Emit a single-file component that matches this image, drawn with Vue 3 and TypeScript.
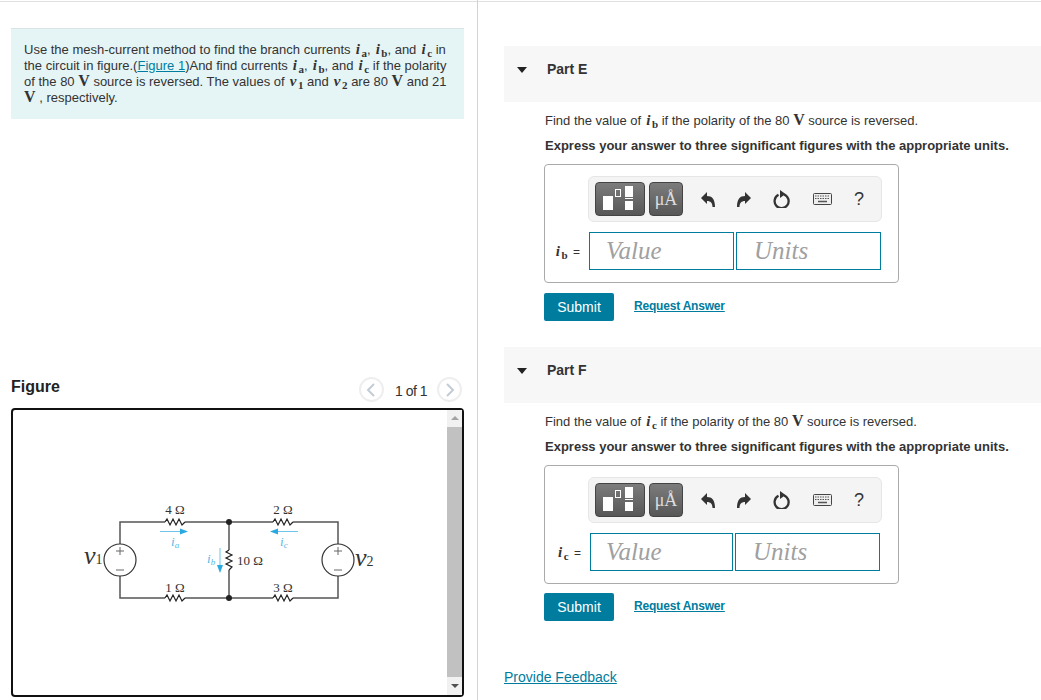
<script setup lang="ts">
interface Part {
  title: string
  sym: string
  sub: string
}

const parts: Part[] = [
  { title: 'Part E', sym: 'i', sub: 'b' },
  { title: 'Part F', sym: 'i', sub: 'c' },
]

const wires = [
  'M120 544V522H165',
  'M185 522H273',
  'M293 522H338V544',
  'M120 576V598H165',
  'M185 598H273',
  'M293 598H338V576',
  'M229 522V550',
  'M229 570V598',
]

// resistor zigzags, drawn left to right
const hZig = (x: number, y: number) =>
  `M${x} ${y}l2 -3l3 6l3 -6l3 6l3 -6l3 6l3 -3`
const resistors = [
  hZig(165, 522),
  hZig(273, 522),
  hZig(165, 598),
  hZig(273, 598),
  'M229 550l-3 2l6 3l-6 3l6 3l-6 3l6 3l-3 3',
]

const ohms = [
  { x: 175, y: 514, t: '4 Ω' },
  { x: 283, y: 514, t: '2 Ω' },
  { x: 175, y: 592, t: '1 Ω' },
  { x: 283, y: 592, t: '3 Ω' },
]
</script>

<template>
  <div class="page">
    <div class="left">
      <div class="intro">
        Use the mesh-current method to find the branch currents
        <i class="m">i</i><sub class="s">a</sub>, <i class="m">i</i><sub class="s">b</sub>, and
        <i class="m">i</i><sub class="s">c</sub> in<br />the circuit in figure.(<a class="link">Figure 1</a>)And find
        currents <i class="m">i</i><sub class="s">a</sub>, <i class="m">i</i><sub class="s">b</sub>, and
        <i class="m">i</i><sub class="s">c</sub> if the polarity<br />of the 80 <b class="unit">V</b> source is
        reversed. The values of <i class="m">v</i><sub class="s">1</sub> and <i class="m">v</i><sub class="s">2</sub>
        are 80 <b class="unit">V</b> and 21<br /><b class="unit">V</b> , respectively.
      </div>

      <div class="fig-head">
        <span class="fig-title">Figure</span>
        <div class="pager">
          <span class="round">
            <svg width="10" height="14" viewBox="0 0 10 14"><path d="M8 1L2 7l6 6" class="chev" /></svg>
          </span>
          <span class="count">1 of 1</span>
          <span class="round">
            <svg width="10" height="14" viewBox="0 0 10 14"><path d="M2 1l6 6l-6 6" class="chev" /></svg>
          </span>
        </div>
      </div>

      <div class="fig-box">
        <svg class="circuit" width="434" height="285" viewBox="13 410 434 285">
          <path v-for="d in wires" :key="d" :d="d" class="wire" />
          <path v-for="d in resistors" :key="d" :d="d" class="res" />
          <circle cx="229" cy="522" r="3" fill="#222" />
          <circle cx="229" cy="598" r="3" fill="#222" />
          <circle cx="120" cy="560" r="16" class="src" />
          <circle cx="338" cy="560" r="16" class="src" />
          <path d="M116 551h8M120 547v8M116 570h8M334 551h8M338 547v8M334 570h8" class="sign" />

          <text v-for="o in ohms" :key="o.t" :x="o.x" :y="o.y" class="val" text-anchor="middle">{{ o.t }}</text>
          <text x="237" y="565" class="val">10 Ω</text>
          <text x="84" y="564" class="vs">v<tspan class="vn" dx="0">1</tspan></text>
          <text x="355" y="566" class="vs">v<tspan class="vn" dx="0">2</tspan></text>

          <path d="M160 531.500H182" class="blue" />
          <path d="M188 531.500l-8 -3v6z" fill="#2aa9e0" />
          <path d="M298 531.500H276" class="blue" />
          <path d="M270 531.500l8 -3v6z" fill="#2aa9e0" />
          <path d="M220 548V566" class="blue" />
          <path d="M220 573l-3 -8h6z" fill="#2aa9e0" />
          <text x="171" y="546" class="cur">i<tspan class="cur-sub" dy="2">a</tspan></text>
          <text x="280" y="546" class="cur">i<tspan class="cur-sub" dy="2">c</tspan></text>
          <text x="207" y="563" class="cur">i<tspan class="cur-sub" dy="2">b</tspan></text>
        </svg>
        <div class="scroll">
          <span class="tri up"></span>
          <span class="thumb"></span>
          <span class="tri down"></span>
        </div>
      </div>
    </div>

    <div class="right">
      <section v-for="p in parts" :key="p.title" class="part">
        <div class="part-head">
          <span class="caret"></span>
          <span class="part-title">{{ p.title }}</span>
        </div>
        <div class="part-body">
          <p class="ask">
            Find the value of <i class="m">{{ p.sym }}</i><sub class="s">{{ p.sub }}</sub> if the polarity of the 80
            <b class="unit">V</b> source is reversed.
          </p>
          <p class="express">Express your answer to three significant figures with the appropriate units.</p>

          <div class="answer">
            <div class="toolbar">
              <span class="tbtn tpl">
                <svg width="34" height="26" viewBox="0 0 34 26">
                  <rect x="0" y="10" width="10" height="14" fill="#fff" />
                  <rect x="12.500" y="3.500" width="5" height="7" fill="none" stroke="#fff" />
                  <rect x="22" y="0" width="8" height="11" fill="#fff" />
                  <rect x="22" y="12" width="8" height="1" fill="#fff" />
                  <rect x="22" y="15" width="8" height="9" fill="#fff" />
                </svg>
              </span>
              <span class="tbtn mu">μÅ</span>
              <span class="icons">
                <svg width="14" height="15" viewBox="0 0 14 15">
                  <path d="M0 6L6 0V4C11 4 14 7 14 15H11.500C11.500 11 9.500 9 6 9V12z" fill="#333" />
                </svg>
                <svg width="14" height="15" viewBox="0 0 14 15">
                  <path d="M14 6L8 0V4C3 4 0 7 0 15H2.500C2.500 11 4.500 9 8 9V12z" fill="#333" />
                </svg>
                <svg width="17" height="18" viewBox="0 0 17 18">
                  <path d="M5.500 4.800A7 7 0 1 0 11 4.500" fill="none" stroke="#333" stroke-width="2.300" />
                  <path d="M7 0L12.500 4L7 8z" fill="#333" />
                </svg>
                <svg width="19" height="12" viewBox="0 0 19 12">
                  <rect x="0.500" y="0.500" width="18" height="11" rx="1" fill="#eee" stroke="#444" />
                  <path d="M2 3h15M2 5.500h15" stroke="#555" stroke-width="1.200" stroke-dasharray="1.500 1" />
                  <path d="M5 8.500h9" stroke="#555" stroke-width="1.500" />
                </svg>
                <span class="help">?</span>
              </span>
            </div>
            <div class="entry" :class="{ tight: p.sub === 'c' }">
              <span class="label"><i class="m">{{ p.sym }}</i><sub class="s">{{ p.sub }}</sub> =</span>
              <span class="field value">Value</span>
              <span class="field">Units</span>
            </div>
          </div>

          <div class="actions" :class="{ tight: p.sub === 'c' }">
            <span class="submit">Submit</span>
            <a class="request">Request Answer</a>
          </div>
        </div>
      </section>
      <a class="link feedback">Provide Feedback</a>
    </div>
  </div>
</template>

<style>
html,
body {
  background: #fff;
}
</style>

<style scoped>
.page {
  display: flex;
  width: 1041px;
  height: 700px;
  box-sizing: border-box;
  overflow: hidden;
  font-family: 'Liberation Sans', Arial, sans-serif;
  font-size: 13px;
  color: #333;
  background: linear-gradient(#e0e0e0, #e0e0e0) 0 1px / 100% 1px no-repeat;
}

.left {
  width: 478px;
  flex: none;
  box-sizing: border-box;
  padding: 28px 13px 0 11px;
  border-right: 1px solid #c9d5e4;
}

.intro {
  height: 91px;
  box-sizing: border-box;
  padding: 13px 0 0 13px;
  background: #e5f5f6;
  border-top: 1px solid #d9e4e6;
  line-height: 16px;
  white-space: nowrap;
}

.m {
  font-family: 'Liberation Serif', serif;
  font-weight: bold;
  font-style: italic;
  font-size: 15px;
  line-height: 0;
  margin: 0 1.500px;
}

.s {
  font-family: 'Liberation Serif', serif;
  font-weight: bold;
  font-size: 11px;
  line-height: 0;
  vertical-align: -3px;
}

.unit {
  font-family: 'Liberation Serif', serif;
  font-size: 16px;
  line-height: 0;
}

.link {
  color: #007c9e;
  text-decoration: underline;
}

.fig-head {
  display: flex;
  align-items: center;
  justify-content: space-between;
  margin-top: 258px;
  height: 25px;
}

.fig-title {
  margin-bottom: 6px;
  font-size: 16px;
  font-weight: bold;
  color: #222;
}

.pager {
  display: flex;
  align-items: center;
  margin-right: 2px;
}

.round {
  display: flex;
  align-items: center;
  justify-content: center;
  box-sizing: border-box;
  width: 25px;
  height: 25px;
  border: 2px solid #eee;
  border-radius: 50%;
}

.chev {
  fill: none;
  stroke: #c3ccd5;
  stroke-width: 2;
}

.count {
  margin: 2px 10px 0 11px;
  font-size: 14px;
  letter-spacing: -0.5px;
}

.fig-box {
  display: flex;
  justify-content: space-between;
  box-sizing: border-box;
  height: 289px;
  margin-top: 6px;
  border: 2px solid #111;
  border-radius: 4px;
}

.wire,
.res {
  fill: none;
  stroke: #555;
  stroke-width: 1.500;
}

.res {
  stroke: #222;
  stroke-width: 1.200;
}

.src {
  fill: #fff;
  stroke: #333;
  stroke-width: 1.200;
}

.sign {
  fill: none;
  stroke: #666;
}

.val {
  font-family: 'Liberation Serif', serif;
  font-size: 13px;
  fill: #333;
}

.vs {
  font-family: 'Liberation Serif', serif;
  font-style: italic;
  font-size: 26px;
  fill: #333;
}

.vn {
  font-style: normal;
  font-size: 14px;
}

.blue {
  fill: none;
  stroke: #6cc4ea;
  stroke-width: 1;
}

.cur {
  font-family: 'Liberation Serif', serif;
  font-style: italic;
  font-size: 13px;
  fill: #5ab8e4;
}

.cur-sub {
  font-size: 9px;
}

.scroll {
  width: 15px;
  flex: none;
  display: flex;
  flex-direction: column;
  align-items: center;
  justify-content: space-between;
  background: #f1f1f1;
  padding: 6px 0 7px;
  box-sizing: border-box;
}

.thumb {
  width: 15px;
  height: 250px;
  background: #c1c1c1;
}

.tri {
  width: 0;
  height: 0;
  border-left: 4px solid transparent;
  border-right: 4px solid transparent;
}

.tri.up {
  border-bottom: 4px solid #a3a3a3;
}

.tri.down {
  border-top: 4px solid #505050;
}

.right {
  flex: 1;
  padding: 46px 0 0 26px;
  min-width: 0;
}

.part {
  height: 301px;
}

.part-head {
  display: flex;
  align-items: flex-start;
  height: 56px;
  background: #f7f7f7;
  box-sizing: border-box;
  padding-top: 15px;
}

.caret {
  width: 0;
  height: 0;
  margin: 6px 0 0 13px;
  border-left: 5px solid transparent;
  border-right: 5px solid transparent;
  border-top: 6px solid #222;
}

.part-title {
  margin-left: 20px;
  font-size: 14px;
  font-weight: bold;
  color: #333;
}

.part-body {
  padding: 6px 0 0 41px;
}

.ask,
.express {
  margin: 0;
  line-height: 25px;
  height: 25px;
}

.express {
  font-weight: bold;
}

.answer {
  width: 355px;
  height: 119px;
  box-sizing: border-box;
  margin: 6px 0 0 -1px;
  padding: 11px 16px 0 43px;
  border: 1px solid #aaa;
  border-radius: 4px;
}

.toolbar {
  display: flex;
  align-items: center;
  height: 46px;
  box-sizing: border-box;
  padding-left: 6px;
  background: #f4f4f4;
  border: 1px solid #e6e6e6;
  border-radius: 6px;
}

.tbtn {
  display: flex;
  align-items: center;
  justify-content: center;
  box-sizing: border-box;
  height: 34px;
  border: 1px solid #444;
  border-radius: 4px;
  background: linear-gradient(#7c7c7c, #575757);
}

.tpl {
  width: 50px;
  margin-right: 4px;
}

.mu {
  width: 34px;
  font-family: 'Liberation Serif', serif;
  font-size: 18px;
  color: #ddd;
}

.icons {
  display: flex;
  align-items: center;
  justify-content: space-between;
  width: 163px;
  margin-left: 18px;
}

.help {
  font-size: 18px;
  color: #333;
}

.entry {
  position: relative;
  display: flex;
  gap: 2px;
  margin-top: 10px;
  margin-left: 1px;
}

.entry.tight {
  margin-left: 2px;
}

.label {
  position: absolute;
  right: 100%;
  top: 13px;
  width: 44px;
  box-sizing: border-box;
  padding-right: 9px;
  text-align: right;
  font-size: 12px;
  word-spacing: 2px;
  white-space: nowrap;
}

.field {
  width: 145px;
  height: 38px;
  box-sizing: border-box;
  padding-left: 17px;
  border: 1px solid #007c9e;
  font-family: 'Liberation Serif', serif;
  font-style: italic;
  font-size: 25px;
  line-height: 36px;
  color: #a0a0a0;
}

.field.value {
  padding-left: 16px;
}

.entry.tight .field.value {
  width: 143px;
  padding-left: 15px;
}

.actions {
  display: flex;
  align-items: center;
  margin-top: 10px;
  margin-left: -1px;
}

.actions.tight {
  margin-top: 9px;
}

.submit {
  width: 70px;
  height: 28px;
  line-height: 28px;
  text-align: center;
  font-size: 14px;
  background: #007c9e;
  border-radius: 2px;
  color: #fff;
}

.request {
  margin: -3px 0 0 20px;
  font-size: 12px;
  letter-spacing: -0.2px;
  font-weight: bold;
  color: #007c9e;
  text-decoration: underline;
}

.feedback {
  display: block;
  margin-top: 21px;
  font-size: 14px;
}
</style>
